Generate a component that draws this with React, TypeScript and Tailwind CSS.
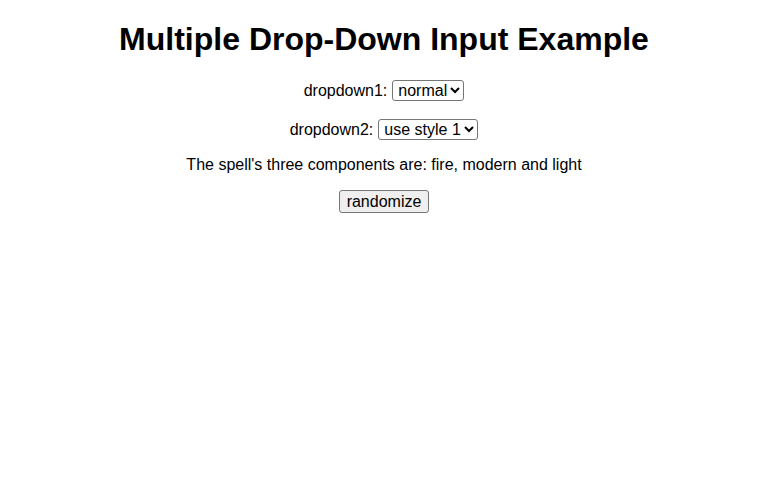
import React, { useState } from "react";

const opts1 = ["normal", "fire", "water", "earth"];
const opts2 = ["use style 1", "use style 2", "use style 3"];

export default function App() {
  const [d1, setD1] = useState("normal");
  const [d2, setD2] = useState("use style 1");

  return (
    <div className="min-h-screen bg-white text-black text-center font-['Liberation_Sans',Arial,sans-serif] text-base">
      <h1 className="text-[32px] font-bold pt-[21px] pb-[22px] leading-[37px]">
        Multiple Drop-Down Input Example
      </h1>

      <div className="flex flex-col items-center">
        <label className="flex items-center gap-[5px] h-[21px]">
          dropdown1:
          <select
            value={d1}
            onChange={(e) => setD1(e.target.value)}
            className="h-[21px] border border-[#767676] rounded-[3px] bg-white pl-[1px] text-base leading-[19px] text-black"
          >
            {opts1.map((o) => (
              <option key={o}>{o}</option>
            ))}
          </select>
        </label>

        <label className="flex items-center gap-[5px] h-[21px] mt-[18px]">
          dropdown2:
          <select
            value={d2}
            onChange={(e) => setD2(e.target.value)}
            className="h-[21px] border border-[#767676] rounded-[3px] bg-white pl-[1px] text-base leading-[19px] text-black"
          >
            {opts2.map((o) => (
              <option key={o}>{o}</option>
            ))}
          </select>
        </label>

        <p className="mt-[16px] leading-[18px]">
          The spell's three components are: fire, modern and light
        </p>

        <button className="mt-[16px] h-[23px] px-[7px] border border-[#767676] rounded-[3px] bg-[#efefef] text-base leading-[19px]">
          randomize
        </button>
      </div>
    </div>
  );
}
